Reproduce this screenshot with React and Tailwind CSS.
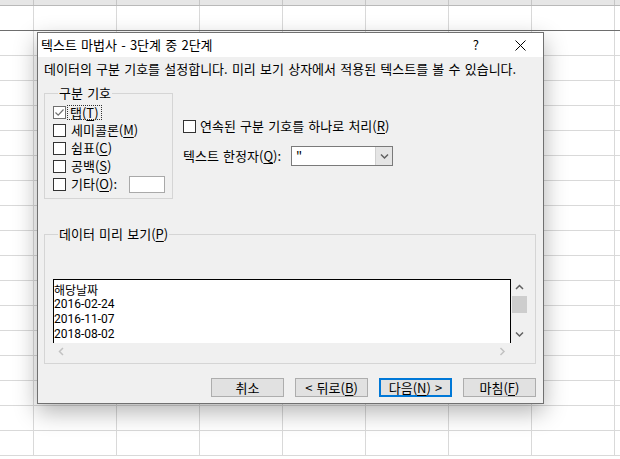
import React from 'react';

const rows = Array.from({ length: 18 });
const cols = Array.from({ length: 8 });

const Mn = ({ children }) => <u className="underline underline-offset-[2px]">{children}</u>;

const CheckBox = ({ checked }) => (
    <span className={`w-[13px] h-[13px] border bg-white flex items-center justify-center shrink-0 ${checked ? 'border-[#6f6f6f]' : 'border-[#333333]'}`}>
        {checked && (
            <svg width="11" height="11" viewBox="0 0 11 11">
                <path d="M1.5 5.5 L4.2 8.2 L9.5 2.5" stroke="#707070" strokeWidth="1.2" fill="none" />
            </svg>
        )}
    </span>
);

const Chevron = ({ dir, color }) => {
    const d = {
        up: 'M1 5 L4.5 1.5 L8 5',
        down: 'M1 1.5 L4.5 5 L8 1.5',
        left: 'M5 1 L1.5 4.5 L5 8',
        right: 'M1.5 1 L5 4.5 L1.5 8',
    }[dir];
    const vertical = dir === 'up' || dir === 'down';
    return (
        <svg width={vertical ? 9 : 7} height={vertical ? 7 : 9} viewBox={vertical ? '0 0 9 7' : '0 0 7 9'}>
            <path d={d} stroke={color} strokeWidth="1.5" fill="none" />
        </svg>
    );
};

const Button = ({ children, primary }) => (
    <div className={`w-[73px] h-[19px] flex items-center justify-center bg-[#e1e1e1] leading-none ${primary ? 'border-2 border-[#0078d7]' : 'border border-[#adadad]'}`}>
        {children}
    </div>
);

const App = () => {
    return (
        <div className="relative w-[620px] h-[459px] overflow-hidden bg-white text-black font-['Noto_Sans_CJK_KR',sans-serif]">
            {/* sheet behind the dialog */}
            <div className="flex flex-col">
                <div className="flex h-[6px] bg-[#e6e6e6] border-b border-[#b9b9b9]">
                    <div className="w-[34px] shrink-0 border-r border-[#c6c6c6]" />
                    {cols.map((_, i) => (
                        <div key={i} className="w-[83px] shrink-0 border-r border-[#c6c6c6]" />
                    ))}
                </div>
                {rows.map((_, r) => (
                    <div key={r} className={`flex h-[25px] shrink-0 border-b ${r === 0 ? 'border-[#6e6e6e]' : 'border-[#d9d9d9]'}`}>
                        <div className="w-[34px] shrink-0 border-r border-[#d9d9d9]" />
                        {cols.map((_, i) => (
                            <div key={i} className="w-[83px] shrink-0 border-r border-[#d9d9d9]" />
                        ))}
                    </div>
                ))}
            </div>

            {/* Text import wizard dialog */}
            <div className="absolute left-[37px] top-[32px] w-[507px] h-[372px] border border-[#707070] bg-[#f0f0f0] flex flex-col shadow-[0_8px_22px_rgba(0,0,0,0.3)] text-[13px] [word-spacing:1.3px]">
                <div className="h-[24px] bg-white flex items-center pl-[3px] leading-[16px] shrink-0">
                    <span>텍스트 마법사 - 3단계 중 2단계</span>
                    <span className="ml-auto">?</span>
                    <svg className="ml-[36px] mr-[17px]" width="11" height="11" viewBox="0 0 11 11">
                        <path d="M0.5 0.5 L10.5 10.5 M10.5 0.5 L0.5 10.5" stroke="#000" strokeWidth="1" />
                    </svg>
                </div>

                <div className="flex flex-col px-[6px] pt-[4px] leading-[16px]">
                    <p>데이터의 구분 기호를 설정합니다. 미리 보기 상자에서 적용된 텍스트를 볼 수 있습니다.</p>

                    <div className="flex items-start mt-[8px]">
                        <fieldset className="w-[129px] border border-[#d5d5d5] pl-[8px] pr-[7px] pb-[5px]">
                            <legend className="ml-[5px] px-[1px] leading-[16px]">구분 기호</legend>
                            <div className="flex flex-col pt-[2px]">
                                <div className="h-[18px] flex items-center gap-[2px]">
                                    <CheckBox checked />
                                    <span className="outline-1 outline-dotted outline-[#333] px-[2px] leading-[13px]">탭(<Mn>T</Mn>)</span>
                                </div>
                                <div className="h-[18px] flex items-center gap-[5px]">
                                    <CheckBox />
                                    <span>세미콜론(<Mn>M</Mn>)</span>
                                </div>
                                <div className="h-[18px] flex items-center gap-[5px]">
                                    <CheckBox />
                                    <span>쉼표(<Mn>C</Mn>)</span>
                                </div>
                                <div className="h-[18px] flex items-center gap-[5px]">
                                    <CheckBox />
                                    <span>공백(<Mn>S</Mn>)</span>
                                </div>
                                <div className="h-[18px] flex items-center gap-[5px]">
                                    <CheckBox />
                                    <span>기타(<Mn>O</Mn>):</span>
                                    <div className="ml-auto w-[36px] h-[17px] border border-[#a9a9a9] bg-white" />
                                </div>
                            </div>
                        </fieldset>

                        <div className="ml-[10px] mt-[32px] flex flex-col">
                            <div className="h-[18px] flex items-center gap-[4px]">
                                <CheckBox />
                                <span>연속된 구분 기호를 하나로 처리(<Mn>R</Mn>)</span>
                            </div>
                            <div className="h-[20px] flex items-center mt-[11px]">
                                <span className="w-[108px]">텍스트 한정자(<Mn>Q</Mn>):</span>
                                <div className="w-[102px] h-[20px] border border-[#7a7a7a] bg-white flex">
                                    <span className="flex-1 pl-[4px] leading-[18px]">"</span>
                                    <div className="w-[17px] bg-[#e5e5e5] border-l border-[#d0d0d0] flex items-center justify-center">
                                        <Chevron dir="down" color="#606060" />
                                    </div>
                                </div>
                            </div>
                        </div>
                    </div>

                    <fieldset className="mt-[27px] w-[492px] border border-[#d5d5d5] pl-[8px] pt-[37px] pb-[3px]">
                        <legend className="ml-[5px] px-[1px] leading-[16px]">데이터 미리 보기(<Mn>P</Mn>)</legend>
                        <div className="flex flex-col w-[475px]">
                            <div className="flex h-[64px]">
                                <div className="w-[458px] border-t border-l border-r border-black bg-white pt-[2px] text-[12px] leading-[15px] overflow-hidden">
                                    <div>해당날짜</div>
                                    <div className="font-['Roboto',sans-serif]">2016-02-24</div>
                                    <div className="font-['Roboto',sans-serif]">2016-11-07</div>
                                    <div className="font-['Roboto',sans-serif]">2018-08-02</div>
                                </div>
                                <div className="w-[17px] flex flex-col items-center">
                                    <div className="h-[17px] flex items-center justify-center">
                                        <Chevron dir="up" color="#606060" />
                                    </div>
                                    <div className="w-[15px] h-[17px] bg-[#cdcdcd]" />
                                    <div className="flex-1" />
                                    <div className="h-[17px] flex items-center justify-center">
                                        <Chevron dir="down" color="#606060" />
                                    </div>
                                </div>
                            </div>
                            <div className="h-[17px] w-[458px] flex items-center justify-between px-[5px]">
                                <Chevron dir="left" color="#c2c2c2" />
                                <Chevron dir="right" color="#c2c2c2" />
                            </div>
                        </div>
                    </fieldset>

                    <div className="flex justify-end gap-[11px] pr-[1px] mt-[14px]">
                        <Button>취소</Button>
                        <Button>&lt; 뒤로(<Mn>B</Mn>)</Button>
                        <Button primary>다음(<Mn>N</Mn>) &gt;</Button>
                        <Button>마침(<Mn>F</Mn>)</Button>
                    </div>
                </div>
            </div>
        </div>
    );
};

export default App;
